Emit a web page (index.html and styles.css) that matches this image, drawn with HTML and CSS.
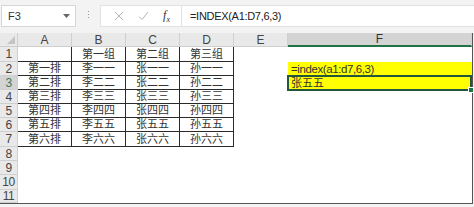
FILE: index.html
```html
<!DOCTYPE html>
<html lang="zh">
<head>
    <meta charset="UTF-8">
    <title>INDEX</title>
    <link rel="stylesheet" href="styles.css">
</head>
<body>
    <div class="toolbar">
        <div class="name-box">
            <span>F3</span>
            <svg class="drop" width="7" height="4" viewBox="0 0 7 4"><path d="M0 0h7L3.5 4z" fill="#666"/></svg>
        </div>
        <div class="dots"><i></i><i></i><i></i></div>
        <div class="formula">
            <div class="buttons">
                <svg width="10" height="10" viewBox="0 0 10 10"><path d="M1 1l8 8M9 1l-8 8" stroke="#b4b4b4" stroke-width="1"/></svg>
                <svg width="11" height="10" viewBox="0 0 11 10"><path d="M1 5.5l3 3L10 1" stroke="#b4b4b4" stroke-width="1" fill="none"/></svg>
                <span class="fx">f<sub>x</sub></span>
            </div>
            <div class="input">=INDEX(A1:D7,6,3)</div>
        </div>
    </div>

    <div class="sheet">
        <div class="corner"><svg width="8" height="8" viewBox="0 0 8 8"><path d="M8 0v8H0z" fill="#c4c4c4"/></svg></div>
        <div class="col-head">A</div>
        <div class="col-head">B</div>
        <div class="col-head">C</div>
        <div class="col-head">D</div>
        <div class="col-head">E</div>
        <div class="col-head sel">F</div>

        <div class="row-head">1</div>
        <div class="cell b"></div>
        <div class="cell b">第一组</div>
        <div class="cell b">第二组</div>
        <div class="cell b">第三组</div>
        <div class="cell"></div>
        <div class="cell"></div>

        <div class="row-head">2</div>
        <div class="cell b">第一排</div>
        <div class="cell b">李一一</div>
        <div class="cell b">张一一</div>
        <div class="cell b">孙一一</div>
        <div class="cell"></div>
        <div class="cell hl left">=index(a1:d7,6,3)</div>

        <div class="row-head sel">3</div>
        <div class="cell b">第二排</div>
        <div class="cell b">李二二</div>
        <div class="cell b">张二二</div>
        <div class="cell b">孙二二</div>
        <div class="cell"></div>
        <div class="cell hl left active">张五五</div>

        <div class="row-head">4</div>
        <div class="cell b">第三排</div>
        <div class="cell b">李三三</div>
        <div class="cell b">张三三</div>
        <div class="cell b">孙三三</div>
        <div class="cell"></div>
        <div class="cell"></div>

        <div class="row-head">5</div>
        <div class="cell b">第四排</div>
        <div class="cell b">李四四</div>
        <div class="cell b">张四四</div>
        <div class="cell b">孙四四</div>
        <div class="cell"></div>
        <div class="cell"></div>

        <div class="row-head">6</div>
        <div class="cell b">第五排</div>
        <div class="cell b">李五五</div>
        <div class="cell b">张五五</div>
        <div class="cell b">孙五五</div>
        <div class="cell"></div>
        <div class="cell"></div>

        <div class="row-head">7</div>
        <div class="cell b">第六排</div>
        <div class="cell b">李六六</div>
        <div class="cell b">张六六</div>
        <div class="cell b">孙六六</div>
        <div class="cell"></div>
        <div class="cell"></div>

        <div class="row-head">8</div>
        <div class="cell empty"></div>
        <div class="row-head">9</div>
        <div class="cell empty"></div>
        <div class="row-head">10</div>
        <div class="cell empty"></div>
        <div class="row-head">11</div>
        <div class="cell empty"></div>
    </div>
</body>
</html>
```

FILE: styles.css
```css
body {
    margin: 0;
    padding: 0;
    width: 474px;
    height: 207px;
    overflow: hidden;
    background-color: #f3f3f3;
    font-family: "Liberation Sans", "Noto Sans CJK SC", sans-serif;
    color: #222;
}

/* barre de formule */
.toolbar {
    height: 33px;
    display: flex;
    align-items: flex-start;
    padding-top: 5px;
    box-sizing: border-box;
}

.name-box {
    width: 75px;
    height: 22px;
    margin-left: 1px;
    box-sizing: border-box;
    background-color: #fff;
    border: 1px solid #d6d6d6;
    display: flex;
    align-items: center;
    justify-content: space-between;
    padding: 0 5px 0 6px;
    font-size: 11px;
    color: #333;
}

.dots {
    width: 24px;
    display: flex;
    flex-direction: column;
    align-items: center;
    gap: 2px;
    padding-top: 6px;
}

.dots i {
    width: 1px;
    height: 1px;
    background-color: #999;
}

.formula {
    flex: 1;
    height: 22px;
    display: flex;
    background-color: #fff;
    border-top: 1px solid #e2e2e2;
    border-bottom: 1px solid #e2e2e2;
    box-sizing: border-box;
}

.buttons {
    width: 82px;
    display: flex;
    align-items: center;
    justify-content: space-around;
    padding: 0 4px 0 6px;
    border-left: 1px solid #e2e2e2;
    border-right: 1px solid #e2e2e2;
    box-sizing: border-box;
}

.fx {
    font-family: "Liberation Serif", serif;
    font-style: italic;
    font-size: 12px;
    color: #333;
}

.fx sub {
    font-size: 8px;
}

.input {
    flex: 1;
    padding-left: 8px;
    font-size: 11px;
    letter-spacing: -0.3px;
    line-height: 20px;
    color: #222;
}

/* feuille */
.sheet {
    display: grid;
    grid-template-columns: 18px repeat(5, 54px) 184px;
    grid-template-rows: 14px 15px 14px 14px 14px 14px 14px 15px 14px 14px 15px 13px;
    width: 472px;
    background-color: #fff;
    border-right: 1px solid #555;
    border-bottom: 1px solid #555;
}

.corner,
.col-head,
.row-head {
    background-color: #e9e9e9;
    box-sizing: border-box;
    border-right: 1px solid #cfcfcf;
    border-bottom: 1px solid #cfcfcf;
    display: flex;
    align-items: center;
    justify-content: center;
    font-size: 12px;
    color: #444;
}

.row-head {
    letter-spacing: -0.5px;
}

.corner {
    justify-content: flex-end;
    align-items: flex-end;
    padding: 0 2px 2px 0;
}

.col-head.sel {
    background-color: #d4d4d4;
    border-bottom: 2px solid #217346;
    color: #333;
}

.row-head.sel {
    background-color: #d4d4d4;
    color: #3d7a58;
}

.cell {
    box-sizing: border-box;
    display: flex;
    align-items: flex-end;
    justify-content: center;
    font-size: 11px;
    line-height: 13px;
    white-space: nowrap;
    color: #333;
}

.cell.b {
    border-right: 1px solid #2a2a2a;
    border-bottom: 1px solid #2a2a2a;
}

.cell.empty {
    grid-column: 2 / 8;
}

.cell.hl {
    background-color: #ffff00;
}

.cell.left {
    justify-content: flex-start;
    padding-left: 3px;
    font-size: 11.5px;
    letter-spacing: -0.4px;
}

.cell.active {
    position: relative;
    font-size: 11px;
    letter-spacing: 0;
}

.cell.active::after {
    content: "";
    position: absolute;
    top: -1px;
    left: -1px;
    right: 0;
    bottom: -1px;
    border: 2px solid #22573b;
}

.cell.active::before {
    content: "";
    position: absolute;
    right: -2px;
    bottom: -3px;
    width: 4px;
    height: 4px;
    background-color: #217346;
    border: 1px solid #fff;
    z-index: 1;
}
```
